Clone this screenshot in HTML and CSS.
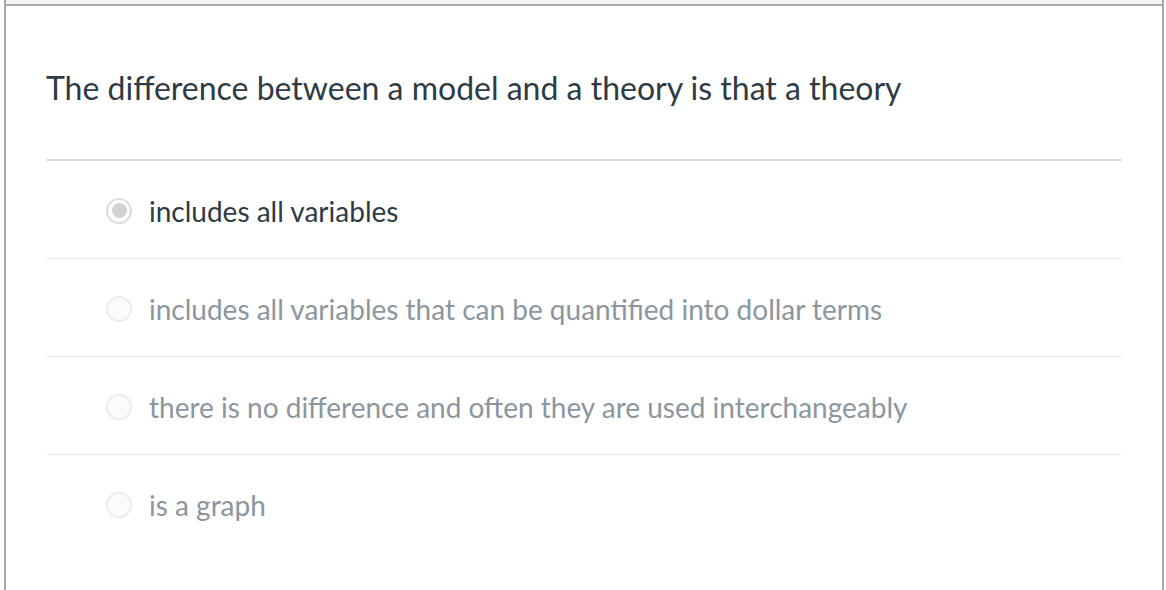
FILE: index.html
```html
<!DOCTYPE html>
<html lang="en">
<head>
<meta charset="utf-8">
<title>Quiz question</title>
<link rel="stylesheet" href="styles.css">
</head>
<body>
<div class="frame">
  <div class="strip"></div>
  <div class="content">
    <div class="question">The difference between a model and a theory is that a theory</div>
    <div class="answers">
      <label class="answer selected"><span class="radio"><span class="dot"></span></span><span class="text">includes all variables</span></label>
      <label class="answer"><span class="radio"></span><span class="text">includes all variables that can be quantified into dollar terms</span></label>
      <label class="answer"><span class="radio"></span><span class="text">there is no difference and often they are used interchangeably</span></label>
      <label class="answer last"><span class="radio"></span><span class="text">is a graph</span></label>
    </div>
  </div>
</div>
</body>
</html>
```
FILE: styles.css
```css
html, body {
  margin: 0;
  padding: 0;
  background: #ffffff;
}
body {
  font-family: Lato, "Liberation Sans", sans-serif;
  width: 1166px;
  height: 590px;
  overflow: hidden;
}
.frame {
  margin-left: 4px;
  width: 1156px;
  height: 590px;
  border-left: 2px solid #a8a8a8;
  border-right: 2px solid #a8a8a8;
}
.strip {
  height: 4px;
  background: #f5f5f5;
  border-bottom: 2px solid #a8a8a8;
}
.content {
  padding: 0 40px;
}
.question {
  font-size: 32px;
  line-height: 40px;
  color: #2d3b45;
  padding: 62px 0 51px;
  border-bottom: 2px solid #dcdcdc;
}
.answers {
  display: flex;
  flex-direction: column;
}
.answer {
  display: flex;
  align-items: center;
  box-sizing: border-box;
  height: 98px;
  padding-left: 60px;
  padding-top: 2px;
  border-bottom: 1px solid #ebebeb;
}
.answer.last {
  border-bottom: none;
}
.radio {
  width: 22px;
  height: 22px;
  border: 2px solid #ececec;
  border-radius: 50%;
  background: #fbfbfb;
  display: flex;
  align-items: center;
  justify-content: center;
  flex: none;
}
.answer.selected .radio {
  border-color: #dddddd;
  background: #ffffff;
}
.dot {
  width: 15px;
  height: 15px;
  border-radius: 50%;
  background: #d2d2d2;
}
.text {
  margin-left: 17px;
  font-size: 28px;
  line-height: 34px;
  color: #8b969e;
}
.answer.selected .text {
  color: #2d3b45;
}
```
